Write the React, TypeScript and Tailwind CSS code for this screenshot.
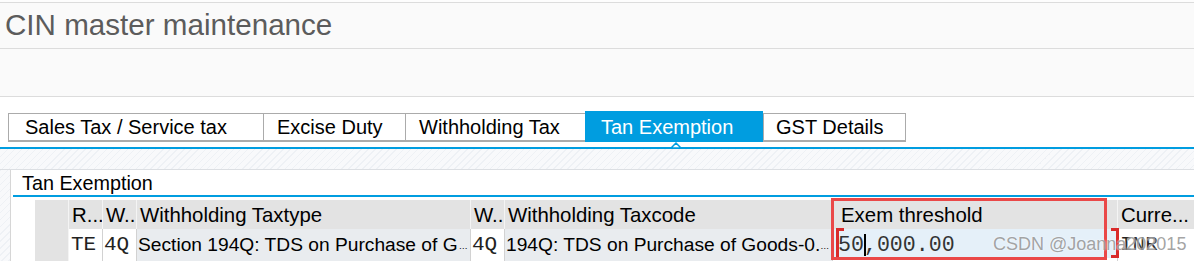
import React from "react";

const sans = "font-['Liberation_Sans',Arial,sans-serif]";
const mono = "font-['Liberation_Mono','Courier_New',monospace]";
const stripe =
  "bg-[repeating-linear-gradient(135deg,#eef1f5_0px,#eef1f5_1px,#f8f9fb_1px,#f8f9fb_5px)]";

function Tab({ label, w, pl, active }: { label: string; w: number; pl: number; active?: boolean }) {
  if (active) {
    return (
      <div
        className="h-[31px] bg-[#009de0] text-white text-[20px] flex items-center shrink-0"
        style={{ width: w, paddingLeft: pl }}
      >
        {label}
      </div>
    );
  }
  return (
    <div
      className="h-[29px] border-l border-t border-b-2 border-[#ababab] bg-white text-black text-[20px] flex items-center shrink-0 last:border-r"
      style={{ width: w, paddingLeft: pl }}
    >
      {label}
    </div>
  );
}

const cols = "grid grid-cols-[34px_34px_34px_334px_34px_328px_285px_120px]";

export default function App() {
  return (
    <div className={`w-[1194px] h-[261px] overflow-hidden bg-white relative ${sans}`}>
      {/* title bar */}
      <div className="h-[2px] bg-[#fdfdfd]" />
      <div className="h-[46px] border-t border-[#dcdcdc] bg-[#fafafa] flex items-center pl-[5px] pb-[2px]">
        <span className="text-[29.6px] text-[#5c5c5c] leading-none">CIN master maintenance</span>
      </div>
      {/* toolbar area */}
      <div className="h-[49px] border-t border-b border-[#dcdcdc] bg-[#fafafa]" />
      {/* tabs */}
      <div className="h-[50px] bg-white pt-[14px] pl-[8px]">
        <div className="flex items-end">
          <Tab label="Sales Tax / Service tax" w={255} pl={16} />
          <Tab label="Excise Duty" w={142} pl={13} />
          <Tab label="Withholding Tax" w={180} pl={13} />
          <Tab label="Tan Exemption" w={178} pl={16} active />
          <Tab label="GST Details" w={143} pl={12} />
        </div>
      </div>
      {/* blue line with caret */}
      <div className="h-[2px] bg-[#009de0] relative">
        <svg className="absolute left-[671px] top-[-5px]" width="10" height="6" viewBox="0 0 10 6">
          <polygon points="0,6 5,1 10,6" fill="#ffffff" stroke="#009de0" strokeWidth="1.5" />
        </svg>
      </div>
      {/* striped band */}
      <div className={`h-[21px] border-b border-[#dcdfe3] ${stripe}`} />
      {/* group */}
      <div className="flex h-[91px] overflow-hidden">
        <div className={`w-[10px] shrink-0 ${stripe}`} />
        <div className="flex-1 border-l border-[#d6d6d6] bg-white flex flex-col">
          <div className="h-[25px] shrink-0 pl-[11px] flex items-center pt-[2px]">
            <span className="text-[19.8px] text-black leading-none">Tan Exemption</span>
          </div>
          <div className="h-[2px] shrink-0 bg-[#009de0] ml-[2px]" />
          <div className="h-[3px] shrink-0" />
          <div className="pl-[24px] shrink-0">
            {/* header */}
            <div className={`${cols} h-[28px] text-[20.4px] text-black`}>
              <div className="bg-[#e3e3e3] border-r border-[#f4f4f4]" />
              <div className="bg-[#e3e3e3] border-r border-[#f4f4f4] flex items-center pl-[3px] overflow-hidden whitespace-nowrap">R...</div>
              <div className="bg-[#e3e3e3] border-r border-[#f4f4f4] flex items-center pl-[3px] overflow-hidden whitespace-nowrap">W..</div>
              <div className="bg-[#e3e3e3] border-r border-[#f4f4f4] flex items-center pl-[3px] whitespace-nowrap">Withholding Taxtype</div>
              <div className="bg-[#e3e3e3] border-r border-[#f4f4f4] flex items-center pl-[3px] overflow-hidden whitespace-nowrap">W..</div>
              <div className="bg-[#e3e3e3] border-r border-[#f4f4f4] flex items-center pl-[3px] whitespace-nowrap">Withholding Taxcode</div>
              <div className="bg-[#e3e3e3] border-r border-[#f4f4f4] flex items-center pl-[8px] whitespace-nowrap">Exem threshold</div>
              <div className="bg-[#e3e3e3] flex items-center pl-[3px] whitespace-nowrap">Curre...</div>
            </div>
            {/* data row */}
            <div className={`${cols} h-[29px] border-t border-[#d2d2d2] text-[19.2px] text-black`}>
              <div className="bg-[#e3e3e3] border-r border-[#f4f4f4]" />
              <div className={`bg-white border-r border-[#d2d2d2] flex items-center pl-[2px] text-[21px] text-[#222] ${mono}`}>TE</div>
              <div className={`bg-white border-r border-[#d2d2d2] flex items-center pl-[1px] text-[21px] text-[#222] ${mono}`}>4Q</div>
              <div className="bg-[#e9ecef] border-r border-[#d2d2d2] flex items-center pl-[1px] whitespace-nowrap overflow-hidden">
                Section 194Q: TDS on Purchase of G<span className="text-[9px] self-end mb-[8px] ml-[1px]">…</span>
              </div>
              <div className={`bg-white border-r border-[#d2d2d2] flex items-center pl-[1px] text-[21px] text-[#222] ${mono}`}>4Q</div>
              <div className="bg-[#e9ecef] border-r border-[#d2d2d2] flex items-center pl-[1px] whitespace-nowrap overflow-hidden">
                194Q: TDS on Purchase of Goods-0.<span className="text-[9px] self-end mb-[8px]">…</span>
              </div>
              <div className={`bg-[#e5f0f9] border-r border-[#d2d2d2] flex items-center pl-[5px] text-[21.6px] text-[#333] ${mono}`}>
                50<span className="inline-block w-[2px] h-[22px] bg-black -mr-[2px]" />,000.00
              </div>
              <div className={`bg-white flex items-center pl-[2px] text-[21px] text-[#222] ${mono}`}>INR</div>
            </div>
            {/* next row */}
            <div className={`${cols} h-[20px] border-t border-[#d2d2d2]`}>
              <div className="bg-[#e3e3e3] border-r border-[#f4f4f4]" />
              <div className="bg-white border-r border-[#d2d2d2]" />
              <div className="bg-white border-r border-[#d2d2d2]" />
              <div className="bg-[#e9ecef] border-r border-[#d2d2d2]" />
              <div className="bg-white border-r border-[#d2d2d2]" />
              <div className="bg-[#e9ecef] border-r border-[#d2d2d2]" />
              <div className="bg-white border-r border-[#d2d2d2]" />
              <div className="bg-white" />
            </div>
          </div>
        </div>
      </div>

      {/* focus brackets around the input field */}
      <div className="absolute left-[836px] top-[228px] w-[8px] h-[32px] border-l-[3px] border-t-[3px] border-[#d92b2b]" />
      <div className="absolute left-[1111px] top-[228px] w-[8px] h-[30px] border-r-[3px] border-t-[3px] border-b-[3px] border-[#d92b2b]" />

      {/* annotation box */}
      <div className="absolute left-[831px] top-[198px] w-[276px] h-[62px] border-[3px] border-[#ea4848]" />

      {/* watermark */}
      <div className="absolute left-[993px] top-[231px] text-[18px] text-[#8c8c8c]/80 whitespace-nowrap [text-shadow:0_0_2px_#ffffff]">
        CSDN @Joanna202015
      </div>
    </div>
  );
}
